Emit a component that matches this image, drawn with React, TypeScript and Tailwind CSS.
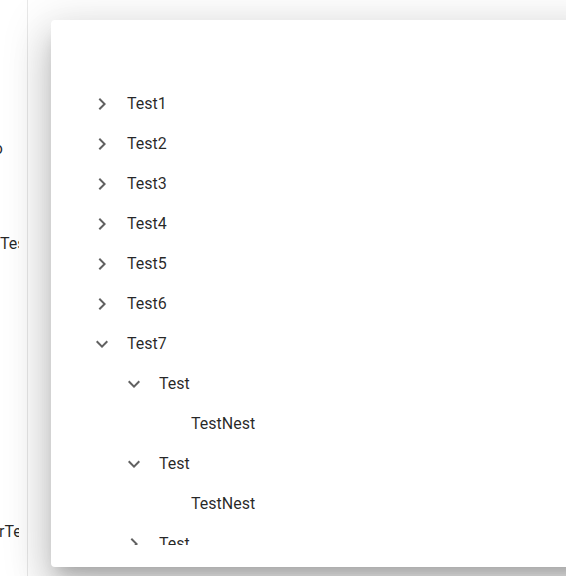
import React from "react";

type Node = { name: string; children?: Node[]; open?: boolean };

const tree: Node[] = [
  { name: "Test1", children: [] },
  { name: "Test2", children: [] },
  { name: "Test3", children: [] },
  { name: "Test4", children: [] },
  { name: "Test5", children: [] },
  { name: "Test6", children: [] },
  {
    name: "Test7",
    open: true,
    children: [
      { name: "Test", open: true, children: [{ name: "TestNest" }] },
      { name: "Test", open: true, children: [{ name: "TestNest" }] },
      { name: "Test", children: [{ name: "TestNest" }] },
    ],
  },
];

function ChevronRight() {
  return (
    <svg viewBox="0 0 24 24" className="w-6 h-6 fill-[#616161]">
      <path d="M10 6L8.59 7.41 13.17 12l-4.58 4.59L10 18l6-6z" />
    </svg>
  );
}

function ChevronDown() {
  return (
    <svg viewBox="0 0 24 24" className="w-6 h-6 fill-[#616161]">
      <path d="M16.59 8.59L12 13.17 7.41 8.59 6 10l6 6 6-6z" />
    </svg>
  );
}

function Rows({ nodes, level }: { nodes: Node[]; level: number }) {
  return (
    <>
      {nodes.map((n, i) => (
        <React.Fragment key={i}>
          <div className="flex items-center h-10 shrink-0" style={{ paddingLeft: level * 32 }}>
            <div className="w-[52px] pl-[15px] flex items-center">
              {n.children ? n.open ? <ChevronDown /> : <ChevronRight /> : null}
            </div>
            <span className="text-base text-black/85">{n.name}</span>
          </div>
          {n.children && n.open && <Rows nodes={n.children} level={level + 1} />}
        </React.Fragment>
      ))}
    </>
  );
}

export default function App() {
  return (
    <div className="h-[576px] w-[566px] overflow-hidden bg-white flex font-['Roboto','Liberation_Sans',sans-serif]">
      {/* side nav, cut off by the dialog overlay */}
      <div className="w-[28px] shrink-0 border-r border-[#e8e8e8] text-base text-black/85 leading-6">
        <div className="w-[19px] overflow-hidden flex flex-col whitespace-nowrap">
          <span className="mt-[137px] ml-[-25px]">Info</span>
          <span className="mt-[71px]">Test</span>
          <span className="mt-[264px] ml-[-1px]">rTest</span>
        </div>
      </div>

      <div className="pl-[23px] pt-5">
        <div className="w-[560px] h-[547px] bg-white rounded shadow-[0_11px_15px_-7px_rgba(0,0,0,0.2),0_24px_38px_3px_rgba(0,0,0,0.14),0_9px_46px_8px_rgba(0,0,0,0.12)] pl-6 pt-[64px] pb-[22px]">
          <div className="h-full overflow-hidden flex flex-col">
            <Rows nodes={tree} level={0} />
          </div>
        </div>
      </div>
    </div>
  );
}
